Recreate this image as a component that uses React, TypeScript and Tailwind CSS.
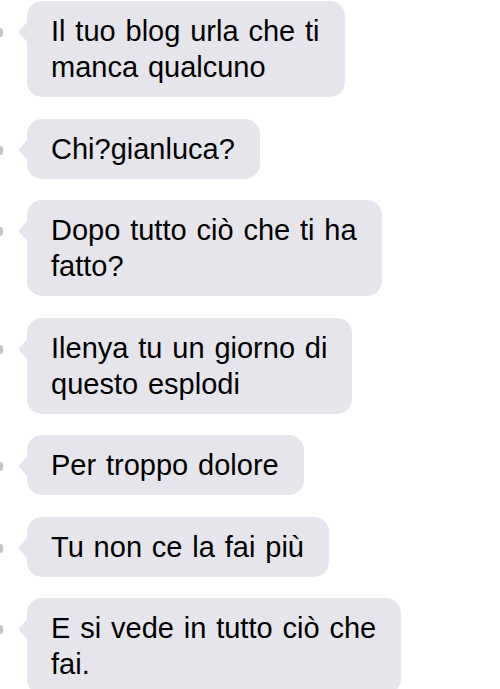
import React from "react";

const messages: string[][] = [
  ["Il tuo blog urla che ti", "manca qualcuno"],
  ["Chi?gianluca?"],
  ["Dopo tutto ciò che ti ha", "fatto?"],
  ["Ilenya tu un giorno di", "questo esplodi"],
  ["Per troppo dolore"],
  ["Tu non ce la fai più"],
  ["E si vede in tutto ciò che", "fai."],
];

function Bubble({ lines }: { lines: string[] }) {
  return (
    <div className="relative pl-[27px]">
      <div className="absolute left-0 top-[27px] h-[9px] w-[3px] rounded-r-full bg-[#b4b4b8] opacity-80" />
      <div className="relative inline-block rounded-[15px] bg-[#e6e5eb] pl-[24px] pr-[25px] pt-[12px] pb-[12px]">
        <svg
          className="absolute left-[-9px] top-[20px]"
          width="10"
          height="22"
          viewBox="0 0 10 22"
        >
          <path d="M10 0 L1.2 10 Q0 11 1.2 12 L10 22 Z" fill="#e6e5eb" />
        </svg>
        <div className="whitespace-nowrap text-[29px] leading-[36px] text-black [word-spacing:1.8px]">
          {lines.map((l, i) => (
            <div key={i}>{l}</div>
          ))}
        </div>
      </div>
    </div>
  );
}

export default function App() {
  return (
    <div
      className="h-[689px] w-[500px] overflow-hidden bg-white pt-[1px]"
      style={{ fontFamily: '"Liberation Sans", Arial, sans-serif' }}
    >
      <div className="flex flex-col gap-[21.5px]">
        {messages.map((m, i) => (
          <Bubble key={i} lines={m} />
        ))}
      </div>
    </div>
  );
}
